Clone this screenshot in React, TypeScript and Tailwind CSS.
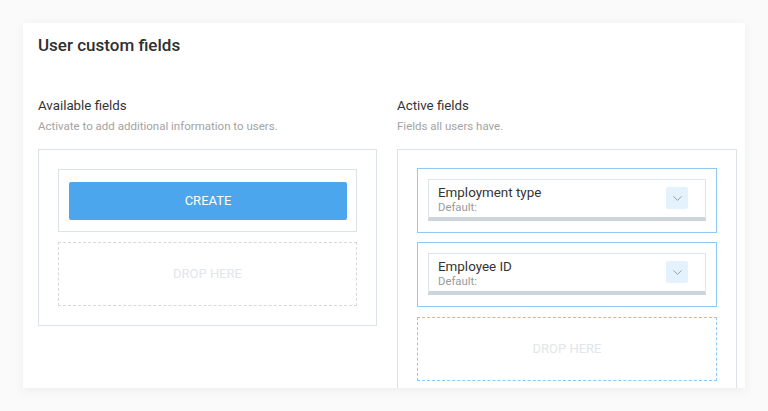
import { ChevronDown } from 'lucide-react';

function FieldCard({ name }: { name: string }) {
  return (
    <div className="h-[65px] border border-[#90c9f5] px-[10px] pt-[10px]">
      <div className="flex h-[42px] items-start justify-between border border-[#dfe4e8] border-b-[4px] border-b-[#cdd4da] bg-white pl-[9px] pr-[17px]">
        <div className="pt-[4px]">
          <p className="text-[13.4px] leading-[17px] text-[#333]">{name}</p>
          <p className="text-[11.3px] leading-[13px] text-[#9a9a9a]">Default:</p>
        </div>
        <div className="mt-[7px] flex h-[22px] w-[22px] items-center justify-center rounded-[2px] bg-[#e4f2fd]">
          <ChevronDown size={15} strokeWidth={1.4} className="text-[#8a949c]" />
        </div>
      </div>
    </div>
  );
}

function DropZone({ blue }: { blue?: boolean }) {
  return (
    <div
      className={`flex h-[64px] items-center justify-center border border-dashed ${
        blue ? 'border-[#8ec7f5]' : 'border-[#d3d9de]'
      }`}
    >
      <span className="text-[13px] text-[#e2e5e9]">DROP HERE</span>
    </div>
  );
}

export default function App() {
  return (
    <div className="h-[411px] w-[768px] bg-[#fafafa] pt-[23px] pl-[23px] font-['Roboto',sans-serif]">
      <div className="h-[365px] w-[722px] overflow-hidden bg-white pl-[15px] pt-[12px] shadow-[0_2px_10px_rgba(0,0,0,0.06)]">
        <h1 className="text-[17px] font-medium leading-[20px] text-[#2f2f2f]">User custom fields</h1>

        <div className="mt-[43px] flex gap-[20px]">
          {/* Available */}
          <div className="w-[339px]">
            <h2 className="text-[13.3px] leading-[16px] text-[#333]">Available fields</h2>
            <p className="mt-[5px] text-[11.5px] leading-[14px] text-[#a3a3a3]">
              Activate to add additional information to users.
            </p>
            <div className="mt-[16px] h-[177px] border border-[#dce2e7] px-[19px] pt-[19px]">
              <div className="border border-[#dce2e7] pt-[12px] pb-[11px] pl-[10px] pr-[9px]">
                <button className="flex h-[38px] w-full items-center justify-center rounded-[2px] bg-[#4ba6ee] text-[13px] text-white">
                  CREATE
                </button>
              </div>
              <div className="mt-[10px]">
                <DropZone />
              </div>
            </div>
          </div>

          {/* Active */}
          <div className="w-[340px]">
            <h2 className="text-[13.3px] leading-[16px] text-[#333]">Active fields</h2>
            <p className="mt-[5px] text-[11.5px] leading-[14px] text-[#a3a3a3]">Fields all users have.</p>
            <div className="mt-[16px] flex h-[260px] flex-col gap-[9px] border border-[#dce2e7] px-[19px] pt-[18px]">
              <FieldCard name="Employment type" />
              <FieldCard name="Employee ID" />
              <div className="mt-[1px]">
                <DropZone blue />
              </div>
            </div>
          </div>
        </div>
      </div>
    </div>
  );
}
